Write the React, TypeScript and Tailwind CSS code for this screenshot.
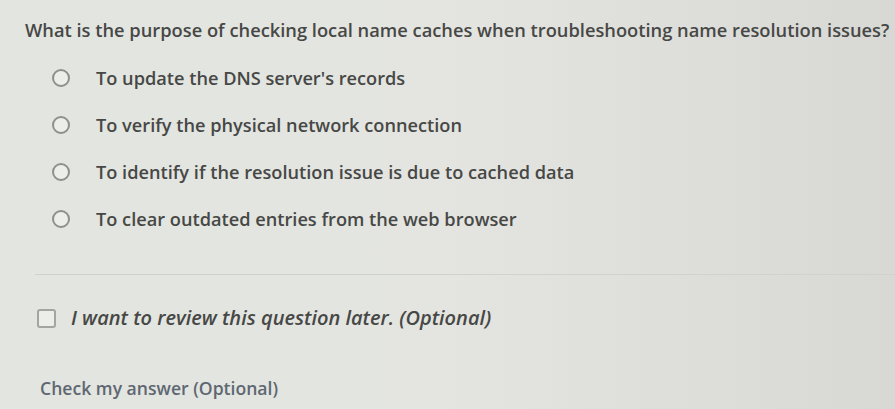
const OPTIONS = [
  "To update the DNS server's records",
  "To verify the physical network connection",
  "To identify if the resolution issue is due to cached data",
  "To clear outdated entries from the web browser",
];

function Radio() {
  return <span className="h-[18px] w-[18px] shrink-0 rounded-full border-2 border-[#8e908d] bg-[#eceeea]" />;
}

export default function App() {
  return (
    <div
      className="h-[409px] w-[895px] overflow-hidden bg-gradient-to-r from-[#e2e5e0] via-[#e4e5e1] to-[#d8d9d5] text-[#474846]"
      style={{ fontFamily: '"Open Sans", "Liberation Sans", sans-serif' }}
    >
      <div className="pl-[25px] pt-[16px]">
        <p className="whitespace-nowrap text-[18.3px] font-semibold leading-[28px]">
          What is the purpose of checking local name caches when troubleshooting name resolution issues?
        </p>
        <ul className="mt-[22px] flex flex-col gap-[23px] pl-[27px]">
          {OPTIONS.map((o) => (
            <li key={o} className="flex items-center gap-[26px]">
              <Radio />
              <span className="whitespace-nowrap text-[18.2px] font-semibold leading-[24px]">{o}</span>
            </li>
          ))}
        </ul>
      </div>
      <div className="ml-[35px] mt-[43px] border-t border-[#cfd2cd]" />
      <div className="mt-[31px] flex items-center gap-[15px] pl-[37px]">
        <span className="h-[19px] w-[19px] shrink-0 rounded-[3px] border-2 border-[#a3a5a2] bg-[#eceeea]" />
        <span className="whitespace-nowrap text-[20px] font-semibold italic leading-[24px]">
          I want to review this question later. (Optional)
        </span>
      </div>
      <div className="mt-[46px] pl-[40px]">
        <span className="text-[17.6px] font-semibold leading-[24px] text-[#5f6772]">Check my answer (Optional)</span>
      </div>
    </div>
  );
}
